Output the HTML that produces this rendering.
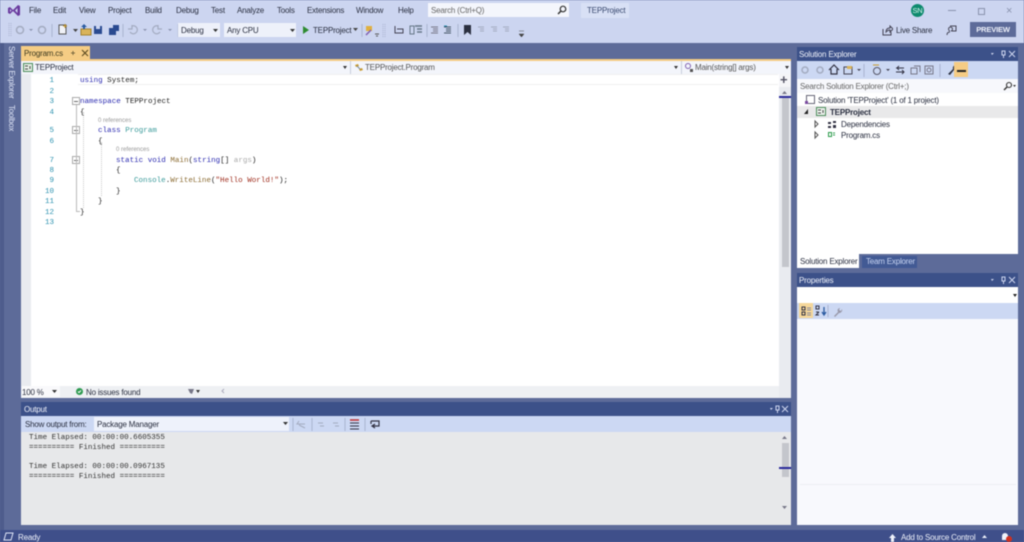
<!DOCTYPE html>
<html><head><meta charset="utf-8"><style>
html,body{margin:0;padding:0;width:1024px;height:542px;overflow:hidden;background:#5d6b99}
#r{position:relative;width:1024px;height:542px;overflow:hidden;font-family:"Liberation Sans",sans-serif;font-size:8px;letter-spacing:-.2px;color:#2a2f40;filter:blur(.4px)}
#r div,#r span,#r svg{position:absolute}
.t{white-space:nowrap;line-height:12px;margin-top:1px}
.m{font-family:"Liberation Mono",monospace;font-size:7.55px;letter-spacing:0;white-space:pre;line-height:11px;color:#222}
.kw{position:static!important;color:#2b2bb0}.ty{position:static!important;color:#3a9a9a}.fn{position:static!important;color:#8a6a30}.st{position:static!important;color:#a03020}.gr{position:static!important;color:#aaa}
.n{color:#2b91af;text-align:right;width:30px;left:24px;font-family:"Liberation Mono",monospace;font-size:7.55px;letter-spacing:0;line-height:11px}
.w{color:#eef1fa}
.box{width:6px;height:6px;border:1px solid #aaa;background:#fff}
.box:after{content:"";position:absolute;left:1px;top:2.5px;width:4px;height:1px;background:#666}
</style></head><body><div id="r">
<!-- top -->
<div style="left:0;top:0;width:1024px;height:43px;background:#ccd5f0"></div>
<svg style="left:7px;top:4px" width="14" height="13" viewBox="0 0 14 13"><path d="M1 4l2-1 3 3 5-5 2 1v9l-2 1-5-5-3 3-2-1zM3 5v3l1.500-1.500zM10.500 4l-2.500 2.500 2.500 2.500z" fill="#6a3a9e" fill-rule="evenodd"/></svg>
<div class="t" style="left:29px;top:4px">File</div>
<div class="t" style="left:53px;top:4px">Edit</div>
<div class="t" style="left:79px;top:4px">View</div>
<div class="t" style="left:108px;top:4px">Project</div>
<div class="t" style="left:145px;top:4px">Build</div>
<div class="t" style="left:176px;top:4px">Debug</div>
<div class="t" style="left:211px;top:4px">Test</div>
<div class="t" style="left:237px;top:4px">Analyze</div>
<div class="t" style="left:277px;top:4px">Tools</div>
<div class="t" style="left:307px;top:4px">Extensions</div>
<div class="t" style="left:356px;top:4px">Window</div>
<div class="t" style="left:398px;top:4px">Help</div>
<div style="left:428px;top:3px;width:141px;height:14px;background:#f4f6fc"></div>
<div class="t" style="left:431px;top:4px;color:#666">Search (Ctrl+Q)</div>
<svg style="left:557px;top:5px" width="10" height="10" viewBox="0 0 10 10"><circle cx="6" cy="4" r="2.800" fill="none" stroke="#333" stroke-width="1.200"/><path d="M4 6L1 9" stroke="#333" stroke-width="1.500"/></svg>
<div style="left:581px;top:3px;width:48px;height:15px;background:#d8e0f5"></div>
<div class="t" style="left:587px;top:4px;color:#3a4a70">TEPProject</div>
<div style="left:911px;top:4px;width:13px;height:13px;border-radius:50%;background:#0e8a6e"></div>
<div class="t" style="left:911px;top:4px;width:13px;text-align:center;color:#d8f5ee;font-size:7.5px">SN</div>
<div style="left:948px;top:10px;width:8px;height:1px;background:#8a93ae"></div>
<div style="left:978px;top:8px;width:5px;height:5px;border:1px solid #8a93ae"></div>
<div class="t" style="left:1006px;top:4px;color:#8a93ae;font-size:11px">×</div>
<!-- toolbar -->
<svg style="left:8px;top:21px" width="520" height="18" viewBox="0 0 520 18" fill="none">
<path d="M1 2v14M3 2v14" stroke="#aab3d0" stroke-dasharray="1 1"/>
<circle cx="12" cy="9" r="3.500" stroke="#a3abc0" stroke-width="1.500"/><path d="M21 8l4 0-2 2z" fill="#8a93ae"/>
<circle cx="34" cy="9" r="3.500" stroke="#a3abc0" stroke-width="1.500"/>
<path d="M44 3v13" stroke="#aab3d0"/>
<rect x="51" y="4" width="7" height="9" fill="#f0f2f8" stroke="#555"/><path d="M57 3v4M55 5h4" stroke="#c89a30"/><path d="M65 8h5l-2.500 3z" fill="#444"/>
<path d="M73 8h10v6h-10z" fill="#d9b45c" stroke="#a58430"/><path d="M76 3l3 3h-2v2h-2v-2h-2z" fill="#2a5aa0"/>
<rect x="86" y="5" width="8" height="8" fill="#2a4a90"/><rect x="88" y="5" width="4" height="3" fill="#ccd5f0"/>
<rect x="101" y="7" width="7" height="7" fill="#2a4a90"/><rect x="105" y="4" width="6" height="6" fill="#2a4a90"/>
<path d="M115 3v13" stroke="#aab3d0"/>
<path d="M124 5a4 4 0 1 1-2 6M124 4v4h-4" stroke="#a3abc0" stroke-width="1.200"/><path d="M135 8h4l-2 2z" fill="#8a93ae"/>
<path d="M150 5a4 4 0 1 0 2 6M150 4v4h4" stroke="#a3abc0" stroke-width="1.200"/><path d="M160 8h4l-2 2z" fill="#8a93ae"/>
<path d="M170 3v13" stroke="#aab3d0"/>
</svg>
<div style="left:178px;top:23px;width:42px;height:14px;background:#eef1fa"></div>
<div class="t" style="left:181px;top:24px">Debug</div>
<div style="left:224px;top:23px;width:72px;height:14px;background:#eef1fa"></div>
<div class="t" style="left:227px;top:24px">Any CPU</div>
<svg style="left:212px;top:27px" width="90" height="6"><path d="M1 2h5l-2.500 3z" fill="#333"/><path d="M78 2h5l-2.500 3z" fill="#333"/></svg>
<svg style="left:302px;top:25px" width="8" height="10"><path d="M1 1l6 4-6 4z" fill="#2e8b30"/></svg>
<div class="t" style="left:313px;top:24px">TEPProject</div>
<svg style="left:352px;top:21px" width="180" height="18" fill="none" viewBox="0 0 180 18">
<path d="M1 7h5l-2.500 3z" fill="#444"/><path d="M10 3v13" stroke="#aab3d0"/>
<path d="M14 5h6v5h-6z" fill="#e0b040"/><path d="M14 14l5-5" stroke="#8060b0" stroke-width="1.500"/>
<path d="M23 13h4M24 15h2" stroke="#555"/>
<path d="M31 3v13M33 3v13" stroke="#aab3d0" stroke-dasharray="1 1"/>
<path d="M43 5v7h8V8h-6" stroke="#445"/>
<rect x="58" y="5" width="4" height="8" stroke="#678"/><path d="M63 5h7M65 8h5M65 11h5" stroke="#678" stroke-width="1.500"/>
<path d="M75 3v13" stroke="#aab3d0"/>
<path d="M79 6h7M81 8h5M81 10h5M79 12h7" stroke="#778"/><path d="M92 6h7M94 8h5M94 10h5M92 12h7" stroke="#456"/><path d="M92 5h3" stroke="#28a"/>
<path d="M106 3v13" stroke="#aab3d0"/>
<path d="M112 4h7v10l-3.500-3-3.500 3z" fill="#2b3040"/>
<path d="M126 6h6M128 8h4M128 10h4" stroke="#a3abc0"/><path d="M139 6h6M141 8h4M141 10h4" stroke="#a3abc0"/><path d="M151 6h6M153 8h4M153 10h4" stroke="#a3abc0"/>
<path d="M167 10h5M167 13h5l-2.500 3z" fill="#444" stroke="#444" stroke-width=".5"/>
</svg>
<svg style="left:882px;top:25px" width="11" height="11" fill="none"><path d="M1 4v6h8V7M4 7c0-3 2-4 4-4V1l3 3-3 3V5C6 5 5 6 4 7z" stroke="#445"/></svg>
<div class="t" style="left:896px;top:24px">Live Share</div>
<svg style="left:946px;top:24px" width="11" height="12" fill="none"><path d="M4 2h6v5H6M5 7a2 2 0 1 0-1 0M1 11c0-2 1-3 3-3" stroke="#445"/></svg>
<div style="left:970px;top:22px;width:46px;height:15px;background:#5d6b99"></div>
<div class="t" style="left:970px;top:23px;width:46px;text-align:center;color:#eef1fa;font-weight:bold;font-size:7.6px">PREVIEW</div>

<!-- left rail -->
<div style="left:0;top:43px;width:4px;height:499px;background:#4e5c8c"></div>
<div class="t w" style="left:5px;top:46px;writing-mode:vertical-rl;line-height:12px;color:#dfe5f7;margin-top:0">Server Explorer</div>
<div class="t w" style="left:5px;top:105px;writing-mode:vertical-rl;line-height:12px;color:#dfe5f7;margin-top:0">Toolbox</div>

<!-- editor -->
<div style="left:21px;top:46px;width:69px;height:14px;background:#f5cc84"></div>
<div class="t" style="left:24px;top:47px;color:#3d3a20">Program.cs</div>
<svg style="left:69px;top:49px" width="20" height="9" fill="none"><path d="M2 4h4M4 2v4" stroke="#7a6a40"/><path d="M13 1l6 6M19 1l-6 6" stroke="#5a4a20" stroke-width="1.100"/></svg>
<div style="left:21px;top:59px;width:770px;height:2px;background:#f5cc84"></div>
<div style="left:21px;top:61px;width:770px;height:13px;background:#f3f5fb"></div>
<svg style="left:23px;top:63px" width="10" height="9"><rect x=".5" y=".5" width="9" height="8" fill="#e8f0e8" stroke="#4a8a5a"/><path d="M2 3h3M2 6h3M7 3v3" stroke="#444"/></svg>
<div class="t" style="left:35px;top:61px">TEPProject</div>
<div style="left:350px;top:61px;width:1px;height:13px;background:#c8cedd"></div>
<div style="left:681px;top:61px;width:1px;height:13px;background:#c8cedd"></div>
<svg style="left:343px;top:66px" width="440" height="4"><path d="M0 0h4L2 3z" fill="#333"/><path d="M331 0h4l-2 3z" fill="#333"/></svg>
<svg style="left:354px;top:62px" width="10" height="11"><path d="M1 3l3-1 1 2-3 1zM5 7l3-1 1 2-3 1z" fill="#c89a30"/><path d="M3 4l3 3" stroke="#789"/></svg>
<div class="t" style="left:365px;top:61px;color:#555">TEPProject.Program</div>
<svg style="left:684px;top:62px" width="11" height="11" fill="none"><circle cx="4" cy="4" r="2.500" stroke="#8060b0"/><rect x="6" y="7" width="3" height="3" fill="#555"/></svg>
<div class="t" style="left:695px;top:61px;color:#555">Main(string[] args)</div>
<svg style="left:785px;top:66px" width="5" height="4"><path d="M0 0h4L2 3z" fill="#333"/></svg>
<div style="left:21px;top:74px;width:758px;height:312px;background:#fff"></div>
<div style="left:21px;top:74px;width:10px;height:312px;background:#e9ebf0"></div>
<div style="left:78px;top:74px;width:700px;height:11px;border-top:1px solid #f0f0f0;border-bottom:1px solid #f0f0f0;box-sizing:border-box"></div>
<div class="n" style="top:76px">1</div><div class="n" style="top:87px">2</div><div class="n" style="top:97px">3</div><div class="n" style="top:108px">4</div><div class="n" style="top:126px">5</div><div class="n" style="top:137px">6</div><div class="n" style="top:156px">7</div><div class="n" style="top:166px">8</div><div class="n" style="top:176px">9</div><div class="n" style="top:187px">10</div><div class="n" style="top:197px">11</div><div class="n" style="top:208px">12</div><div class="n" style="top:218px">13</div>
<div class="box" style="left:72px;top:97px"></div><div class="box" style="left:72px;top:126px"></div><div class="box" style="left:72px;top:156px"></div>
<div style="left:76px;top:105px;width:0;height:106px;border-left:1px solid #bbb"></div>
<div style="left:76px;top:211px;width:4px;height:0;border-top:1px solid #bbb"></div>
<div style="left:83px;top:112px;height:96px;border-left:1px dotted #ccc"></div>
<div style="left:101px;top:142px;height:54px;border-left:1px dotted #ccc"></div>
<div class="m" style="left:80px;top:76px"><span class="kw">using</span> System;</div>
<div class="m" style="left:80px;top:97px"><span class="kw">namespace</span> TEPProject</div>
<div class="m" style="left:80px;top:108px">{</div>
<div class="t" style="left:98px;top:114px;color:#999;font-size:6px;letter-spacing:0">0 references</div>
<div class="m" style="left:98px;top:126px"><span class="kw">class</span> <span class="ty">Program</span></div>
<div class="m" style="left:98px;top:137px">{</div>
<div class="t" style="left:116px;top:143px;color:#999;font-size:6px;letter-spacing:0">0 references</div>
<div class="m" style="left:116px;top:156px"><span class="kw">static void</span> <span class="fn">Main</span>(<span class="kw">string</span>[] <span class="gr">args</span>)</div>
<div class="m" style="left:116px;top:166px">{</div>
<div class="m" style="left:134px;top:176px"><span class="ty">Console</span>.<span class="fn">WriteLine</span>(<span class="st">"Hello World!"</span>);</div>
<div class="m" style="left:116px;top:187px">}</div>
<div class="m" style="left:98px;top:197px">}</div>
<div class="m" style="left:80px;top:208px">}</div>
<!-- editor scrollbar -->
<div style="left:779px;top:74px;width:12px;height:324px;background:#e9ebf0"></div>
<div style="left:779px;top:74px;width:12px;height:13px;background:#f5f5f8"></div>
<div class="t" style="left:780px;top:73px;font-size:13px;font-weight:bold;color:#556;line-height:13px;letter-spacing:0;margin-top:0">+</div>
<svg style="left:782px;top:91px" width="6" height="4"><path d="M0 3h5L2.500 0z" fill="#778"/></svg>
<div style="left:779px;top:96px;width:12px;height:2px;background:#2a2a9a"></div>
<div style="left:782px;top:98px;width:7px;height:169px;background:#c4c6cc"></div>
<!-- status strip -->
<div style="left:21px;top:386px;width:758px;height:12px;background:#eef0f3"></div>
<div style="left:22px;top:386px;width:38px;height:11px;background:#f9f9fb"></div>
<div class="t" style="left:22px;top:386px">100 %</div>
<svg style="left:52px;top:390px" width="6" height="4"><path d="M0 0h5L2.500 3z" fill="#333"/></svg>
<svg style="left:75px;top:387px" width="9" height="9"><circle cx="4.500" cy="4.500" r="3.500" fill="#2e9a50"/><path d="M3 4.500l1 1 2-2" stroke="#fff" fill="none"/></svg>
<div class="t" style="left:86px;top:386px">No issues found</div>
<svg style="left:186px;top:387px" width="40" height="9" fill="none"><path d="M2 2h6l-2 5-2-1z" fill="#778"/><path d="M10 3h4l-2 3z" fill="#333"/><path d="M38 2l-2 2 2 2" stroke="#aab"/></svg>
<!-- output -->
<div style="left:21px;top:402px;width:770px;height:14px;background:#3c5189"></div>
<div class="t w" style="left:24px;top:403px">Output</div>
<svg style="left:769px;top:405px" width="20" height="9" fill="none"><path d="M1 3h3L2 5z" fill="#cdd5ee"/><path d="M7 1h3v4H7zM8.500 5v3" stroke="#cdd5ee"/><path d="M13 1l6 6M19 1l-6 6" stroke="#cdd5ee"/></svg>
<div style="left:21px;top:416px;width:770px;height:16px;background:#ccd8f3"></div>
<div class="t" style="left:25px;top:418px">Show output from:</div>
<div style="left:94px;top:417px;width:195px;height:14px;background:#eef2fb"></div>
<div class="t" style="left:97px;top:418px">Package Manager</div>
<svg style="left:283px;top:422px" width="6" height="4"><path d="M0 0h5L2.500 3z" fill="#333"/></svg>
<svg style="left:292px;top:417px" width="92" height="15" fill="none"><path d="M1 1v13M20 1v13M53 1v13M73 1v13" stroke="#a9b4d0"/><path d="M7 4l-2 3h8M7 8l6 3" stroke="#a3abc0"/><path d="M26 6h5M28 9h4M41 6h5M43 9h4" stroke="#a3abc0"/><path d="M58 3h9" stroke="#c03030" stroke-width="1.500"/><path d="M58 6h9M58 9h9M58 12h9" stroke="#334"/><path d="M79 4h8v5h-6M83 7l-3 2 3 2M79 4v3" stroke="#334" stroke-width="1.200"/></svg>
<div style="left:21px;top:432px;width:770px;height:93px;background:#e7e8ea"></div>
<div class="m" style="left:29px;top:433px;color:#333">Time Elapsed: 00:00:00.6605355</div>
<div class="m" style="left:29px;top:443px;color:#333">========== Finished ==========</div>
<div class="m" style="left:29px;top:462px;color:#333">Time Elapsed: 00:00:00.0967135</div>
<div class="m" style="left:29px;top:472px;color:#333">========== Finished ==========</div>
<svg style="left:782px;top:436px" width="6" height="4"><path d="M0 3h5L2.500 0z" fill="#778"/></svg>
<div style="left:782px;top:443px;width:7px;height:34px;background:#c4c6cc"></div>
<div style="left:779px;top:467px;width:12px;height:2px;background:#2a2a9a"></div>
<svg style="left:782px;top:506px" width="6" height="4"><path d="M0 0h5L2.500 3z" fill="#778"/></svg>
<!-- solution explorer -->
<div style="left:797px;top:47px;width:221px;height:14px;background:#3c5189"></div>
<div class="t w" style="left:799px;top:48px">Solution Explorer</div>
<svg style="left:990px;top:50px" width="26" height="9" fill="none"><path d="M1 3h3L2 5z" fill="#cdd5ee"/><path d="M12 1h3v4h-3zM13.500 5v3" stroke="#cdd5ee"/><path d="M19 1l6 6M25 1l-6 6" stroke="#cdd5ee"/></svg>
<div style="left:797px;top:61px;width:221px;height:18px;background:#ccd8f3"></div>
<svg style="left:798px;top:61px" width="180" height="18" fill="none">
<circle cx="7" cy="9" r="3" stroke="#a3abc0" stroke-width="1.500"/><circle cx="22" cy="9" r="3" stroke="#a3abc0" stroke-width="1.500"/>
<path d="M31 9l5-5 5 5M33 8v5h6V8" stroke="#334" stroke-width="1.200"/>
<path d="M46 6h8v7h-8z" stroke="#445"/><path d="M49 5h5v3h-5z" fill="#d9b45c"/><path d="M59 8h4l-2 2z" fill="#445"/>
<path d="M66 3v13" stroke="#aab3d0"/>
<circle cx="79" cy="10" r="3.500" stroke="#556"/><path d="M75 4h6" stroke="#c89a30"/><path d="M88 8h4l-2 2z" fill="#445"/>
<path d="M98 7h8M101 5l-2 2 2 2M98 11h8M104 9l2 2-2 2" stroke="#334"/>
<path d="M113 7h6v6h-6zM116 5h6v6" stroke="#778"/>
<rect x="127" y="5" width="8" height="8" stroke="#778"/><circle cx="131" cy="9" r="2" stroke="#778"/>
<path d="M142 3v13" stroke="#aab3d0"/>
<path d="M150 13l5-5a3 3 0 0 1 3-4l-2 2 2 1 2-1a3 3 0 0 1-4 3l-4 5z" fill="#2a2f40"/>
</svg>
<div style="left:954px;top:62px;width:14px;height:15px;background:#f5cc84"></div>
<div style="left:957px;top:70px;width:9px;height:2px;background:#222"></div>
<div style="left:797px;top:79px;width:221px;height:14px;background:#f7f8fc"></div>
<div class="t" style="left:800px;top:80px;color:#666">Search Solution Explorer (Ctrl+;)</div>
<svg style="left:1003px;top:81px" width="14" height="10" fill="none"><circle cx="6" cy="4" r="2.500" stroke="#333" stroke-width="1.100"/><path d="M4 6L1 9" stroke="#333" stroke-width="1.400"/><path d="M10 4h3l-1.500 2z" fill="#333"/></svg>
<div style="left:797px;top:93px;width:221px;height:161px;background:#fff"></div>
<div style="left:797px;top:106px;width:221px;height:12px;background:#e9e9ea"></div>
<svg style="left:804px;top:95px" width="50" height="48" fill="none">
<path d="M4 14v5H0z" fill="#222"/>
<rect x="2.500" y=".5" width="8" height="8" stroke="#667"/><path d="M1 6h3v3H1z" fill="#7a4aa0"/>
<rect x="12.500" y="12.500" width="9" height="8" stroke="#4a8a5a" fill="#eef4ee"/><path d="M14 15h3M14 18h3M19 15v3" stroke="#444"/>
<path d="M11 26l3 3-3 3zM11 37l3 3-3 3z" stroke="#555"/>
<path d="M24 27h3v2h-3zM29 26h3v2h-3zM24 31h3v2h-3zM29 30h3v3h-3z" fill="#334"/>
<path d="M24.500 37.500h3v4h-3z" stroke="#2a9a4a"/><path d="M29 38h2M29 40h2" stroke="#2a9a4a"/>
</svg>
<div class="t" style="left:818px;top:94px">Solution 'TEPProject' (1 of 1 project)</div>
<div class="t" style="left:830px;top:106px;font-weight:bold">TEPProject</div>
<div class="t" style="left:841px;top:118px">Dependencies</div>
<div class="t" style="left:841px;top:129px">Program.cs</div>
<div style="left:797px;top:254px;width:62px;height:14px;background:#fff"></div>
<div style="left:862px;top:256px;width:55px;height:12px;background:#425a94"></div>
<div class="t" style="left:800px;top:255px">Solution Explorer</div>
<div class="t" style="left:866px;top:255px;color:#c8d4f2">Team Explorer</div>
<!-- properties -->
<div style="left:797px;top:273px;width:221px;height:14px;background:#3c5189"></div>
<div class="t w" style="left:799px;top:274px">Properties</div>
<svg style="left:990px;top:276px" width="26" height="9" fill="none"><path d="M1 3h3L2 5z" fill="#cdd5ee"/><path d="M12 1h3v4h-3zM13.500 5v3" stroke="#cdd5ee"/><path d="M19 1l6 6M25 1l-6 6" stroke="#cdd5ee"/></svg>
<div style="left:797px;top:287px;width:221px;height:16px;background:#fff"></div>
<svg style="left:1013px;top:294px" width="5" height="3"><path d="M0 0h4L2 3z" fill="#222"/></svg>
<div style="left:797px;top:303px;width:221px;height:16px;background:#ccd8f3"></div>
<div style="left:799px;top:303px;width:14px;height:15px;background:#f5d79a"></div>
<svg style="left:800px;top:305px" width="50" height="12" fill="none">
<path d="M2 2h3v3H2zM2 7h3v3H2z" stroke="#334"/><path d="M7 3h4M7 5h4M7 8h4M7 10h4" stroke="#889"/>
<path d="M16 1h3v3h-3zM16 7h3M19 7l-3 3h3" stroke="#334"/><path d="M24 2v7M22 7l2 3 2-3" stroke="#2a5aa0" stroke-width="1.300"/>
<path d="M28 0v12" stroke="#aab3d0"/>
<path d="M34 11l4-4a2.500 2.500 0 0 1 2-4l-1 2 2 1 1-2a3 3 0 0 1-3 4l-4 4z" fill="#99a"/>
</svg>
<div style="left:797px;top:319px;width:221px;height:206px;background:#f8f9fd"></div>
<div style="left:800px;top:484px;width:216px;height:1px;background:#eceef3"></div>
<!-- status -->
<div style="left:0;top:530px;width:1024px;height:12px;background:#3f4f8a"></div>
<svg style="left:3px;top:532px" width="11" height="9" fill="none"><path d="M3 1h7l-2 7H1z" stroke="#dfe5f7"/></svg>
<div class="t w" style="left:18px;top:531px">Ready</div>
<svg style="left:889px;top:534px" width="7" height="8"><path d="M3.500 0L7 4H5v4H2V4H0z" fill="#eef1fa"/></svg>
<div class="t w" style="left:901px;top:531px">Add to Source Control</div>
<svg style="left:982px;top:535px" width="6" height="4"><path d="M0 3h5L2.500 0z" fill="#eef1fa"/></svg>
<div style="left:1002px;top:533px;width:6px;height:7px;border-radius:3px 3px 0 0;background:#eef1fa"></div>
<div style="left:1006px;top:536px;width:6px;height:6px;border-radius:50%;background:#d03020"></div>
</div></body></html>
